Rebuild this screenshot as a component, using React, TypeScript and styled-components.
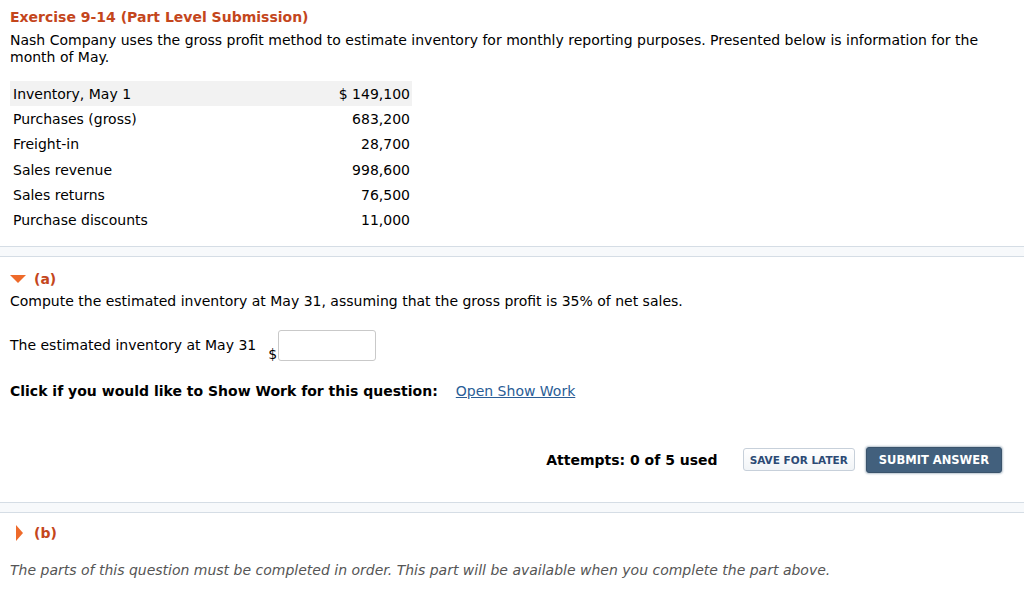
import React from "react";
import styled, { createGlobalStyle } from "styled-components";

const Global = createGlobalStyle`
  html, body { margin: 0; padding: 0; background: #fff; }
  body { font-family: "DejaVu Sans", Verdana, sans-serif; font-size: 14px; color: #000; }
`;

const Page = styled.div`
  width: 1024px;
  display: flex;
  flex-direction: column;
`;

const Intro = styled.section`
  padding: 8px 10px 0 10px;
`;

const Title = styled.h1`
  margin: 0;
  font-size: 14px;
  font-weight: bold;
  color: #c4461c;
  line-height: 18px;
`;

const Para = styled.p`
  margin: 6px 0 0 0;
  line-height: 17px;
  padding-right: 20px;
`;

const DataTable = styled.table`
  margin-top: 15px;
  width: 402px;
  border-collapse: collapse;
`;

const Row = styled.tr<{ $shade?: boolean }>`
  background: ${(p) => (p.$shade ? "#f2f2f2" : "transparent")};
  height: 25.3px;
`;

const Label = styled.td`
  padding: 0 3px;
`;

const Value = styled.td`
  padding: 0 2px;
  text-align: right;
`;

const Divider = styled.div<{ $top: number }>`
  margin-top: ${(p) => p.$top}px;
  height: 9px;
  background: #f7f9fb;
  border-top: 1px solid #d5dde5;
  border-bottom: 1px solid #d5dde5;
`;

const Part = styled.section`
  padding: 0 10px;
`;

const PartHead = styled.div<{ $top: number }>`
  display: flex;
  align-items: center;
  gap: 8px;
  margin-top: ${(p) => p.$top}px;
  height: 18px;
`;

const PartLabel = styled.span`
  font-weight: bold;
  color: #c4461c;
`;

const Question = styled.p`
  margin: 5px 0 0 0;
  line-height: 17px;
`;

const AnswerRow = styled.div`
  display: flex;
  align-items: flex-start;
  margin-top: 21px;
`;

const AnswerLabel = styled.span`
  margin-top: 6px;
  line-height: 17px;
`;

const Dollar = styled.span`
  margin: 15px 1px 0 12px;
  line-height: 17px;
`;

const Input = styled.input`
  width: 98px;
  height: 31px;
  box-sizing: border-box;
  border: 1px solid #c9c9c9;
  border-radius: 3px;
  font: inherit;
  padding: 0 4px;
  margin-top: -1px;
`;

const ShowWork = styled.div`
  display: flex;
  gap: 18px;
  margin-top: 20px;
  line-height: 17px;
`;

const Bold = styled.span`
  font-weight: bold;
`;

const Link = styled.a`
  color: #2a5d96;
  text-decoration: underline;
`;

const ActionBar = styled.div`
  display: flex;
  justify-content: flex-end;
  align-items: center;
  margin-top: 46px;
  padding-right: 12px;
  height: 28px;
`;

const Attempts = styled.span`
  font-weight: bold;
  margin-right: 25px;
`;

const Button = styled.button<{ $primary?: boolean }>`
  font-family: inherit;
  font-weight: bold;
  border-radius: 3px;
  cursor: pointer;
  ${(p) =>
    p.$primary
      ? `
    font-size: 11.5px;
    height: 26px;
    padding: 0 12px;
    color: #fff;
    background: #42607d;
    border: 1px solid #3a536b;
    box-shadow: 0 0 2px 1px #b8c4cf;
  `
      : `
    font-size: 10.5px;
    height: 23px;
    padding: 0 6px;
    color: #2c4a75;
    background: linear-gradient(#ffffff, #f1f4f7);
    border: 1px solid #c7d0da;
    margin-right: 11px;
  `}
`;

const Notice = styled.p`
  margin: 20px 0 0 0;
  font-style: italic;
  color: #555;
  line-height: 17px;
`;

const DownTri = () => (
  <svg width="16" height="10" viewBox="0 0 16 10">
    <polygon points="0,1 16,1 8,9" fill="#ee6a2a" />
  </svg>
);

const RightTri = () => (
  <svg width="16" height="18" viewBox="0 0 16 18">
    <polygon points="6,1 13,9 6,17" fill="#ee6a2a" />
  </svg>
);

const rows: [string, string][] = [
  ["Inventory, May 1", "$ 149,100"],
  ["Purchases (gross)", "683,200"],
  ["Freight-in", "28,700"],
  ["Sales revenue", "998,600"],
  ["Sales returns", "76,500"],
  ["Purchase discounts", "11,000"],
];

export default function App() {
  return (
    <Page>
      <Global />
      <Intro>
        <Title>Exercise 9-14 (Part Level Submission)</Title>
        <Para>
          Nash Company uses the gross profit method to estimate inventory for monthly reporting purposes. Presented
          below is information for the month of May.
        </Para>
        <DataTable>
          <tbody>
            {rows.map(([l, v], i) => (
              <Row key={l} $shade={i === 0}>
                <Label>{l}</Label>
                <Value>{v}</Value>
              </Row>
            ))}
          </tbody>
        </DataTable>
      </Intro>
      <Divider $top={13} />
      <Part>
        <PartHead $top={13}>
          <DownTri />
          <PartLabel>(a)</PartLabel>
        </PartHead>
        <Question>Compute the estimated inventory at May 31, assuming that the gross profit is 35% of net sales.</Question>
        <AnswerRow>
          <AnswerLabel>The estimated inventory at May 31</AnswerLabel>
          <Dollar>$</Dollar>
          <Input type="text" />
        </AnswerRow>
        <ShowWork>
          <Bold>Click if you would like to Show Work for this question:</Bold>
          <Link href="#">Open Show Work</Link>
        </ShowWork>
        <ActionBar>
          <Attempts>Attempts: 0 of 5 used</Attempts>
          <Button>SAVE FOR LATER</Button>
          <Button $primary>SUBMIT ANSWER</Button>
        </ActionBar>
      </Part>
      <Divider $top={28} />
      <Part>
        <PartHead $top={11}>
          <RightTri />
          <PartLabel>(b)</PartLabel>
        </PartHead>
        <Notice>The parts of this question must be completed in order. This part will be available when you complete the part above.</Notice>
      </Part>
    </Page>
  );
}
